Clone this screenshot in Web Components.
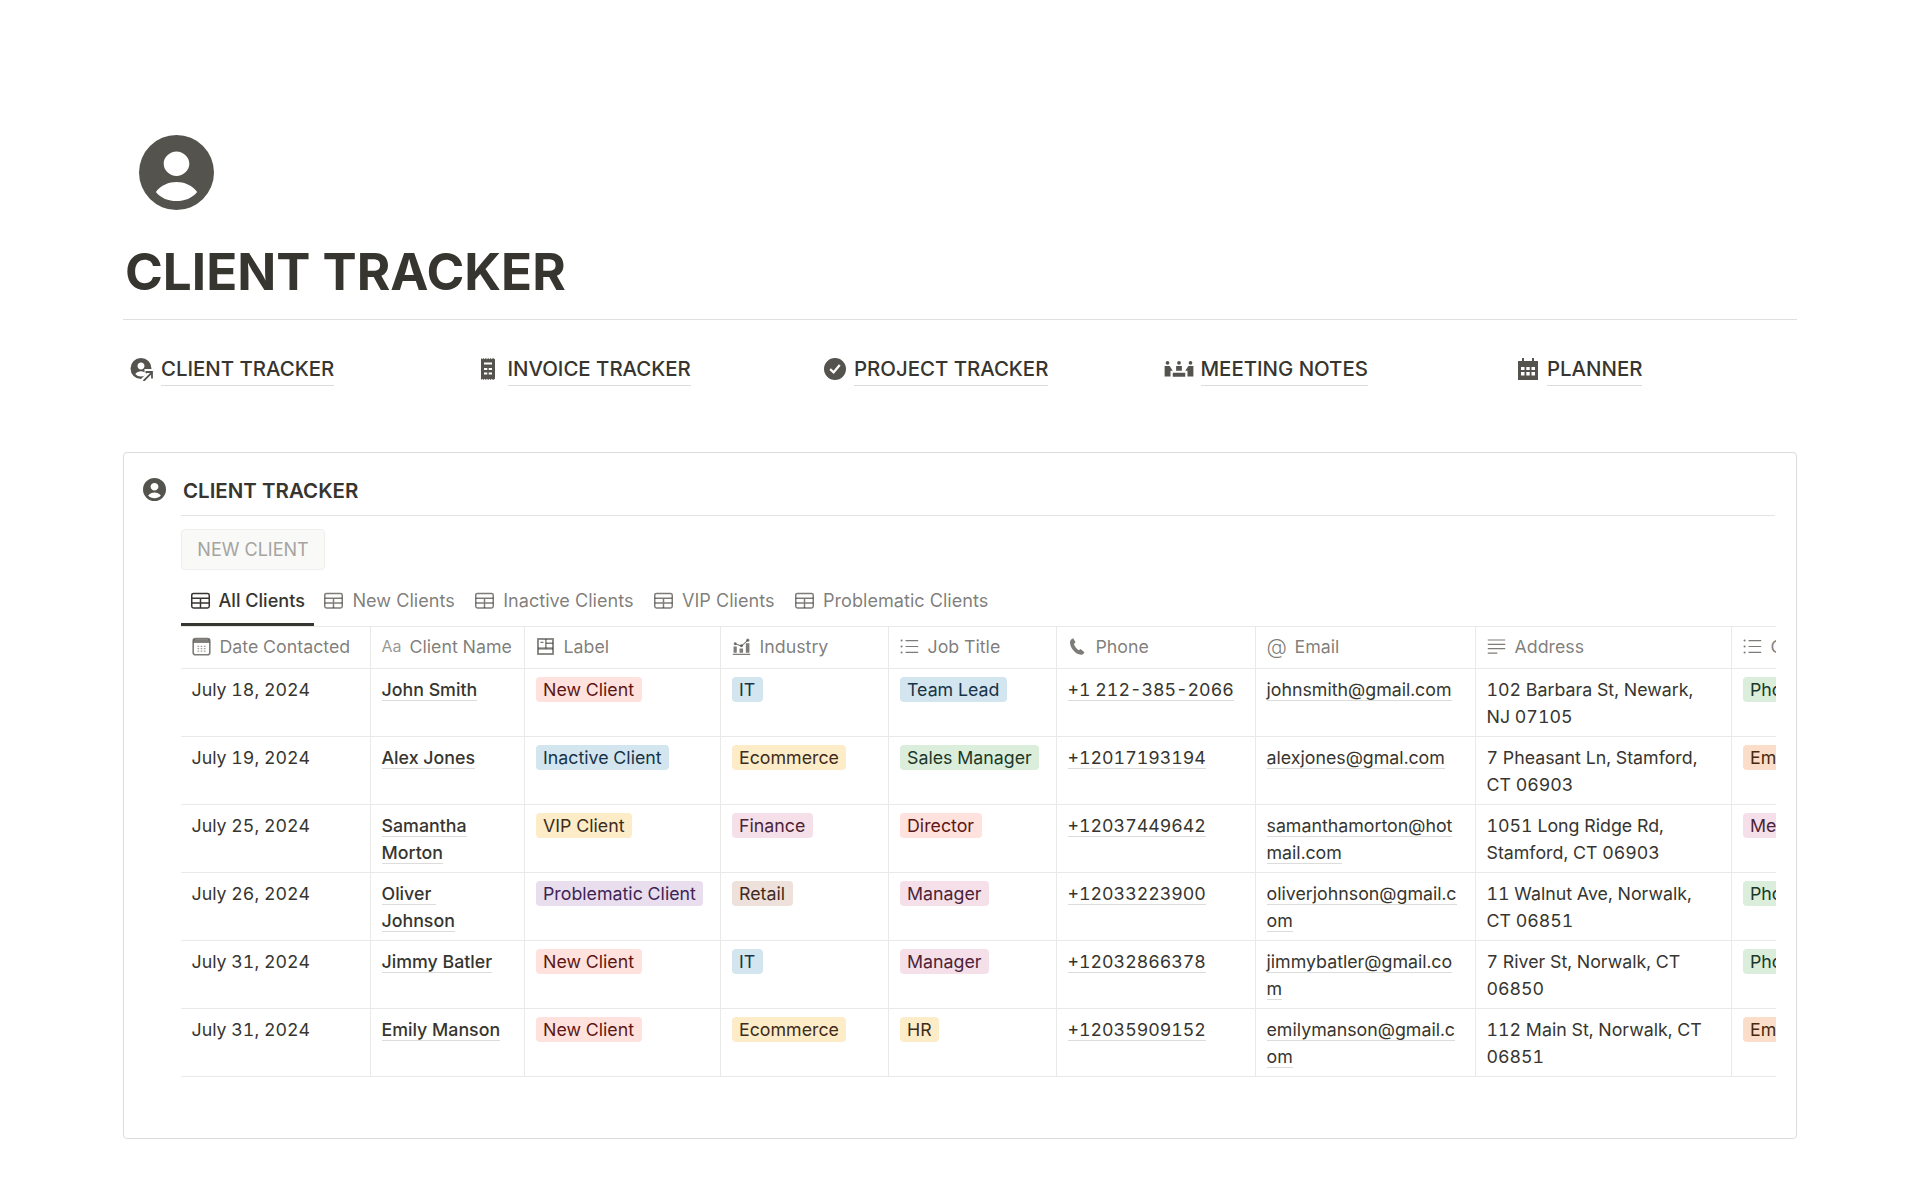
<!DOCTYPE html>
<html lang="en">
<head>
<meta charset="utf-8">
<title>Client Tracker</title>
<style>
  html, body { margin: 0; background: #fff; }
  body { font-family: Inter, "Liberation Sans", sans-serif; color: #37352f; }
</style>
</head>
<body>
<tracker-page>
  <page-head slot="head" title="CLIENT TRACKER"></page-head>
  <nav-link slot="links" icon="person-link">CLIENT TRACKER</nav-link>
  <nav-link slot="links" icon="receipt">INVOICE TRACKER</nav-link>
  <nav-link slot="links" icon="check">PROJECT TRACKER</nav-link>
  <nav-link slot="links" icon="meeting" wide>MEETING NOTES</nav-link>
  <nav-link slot="links" icon="calendar">PLANNER</nav-link>
  <client-card slot="card" heading="CLIENT TRACKER">
    <view-tabs></view-tabs>
    <client-table></client-table>
  </client-card>
</tracker-page>

<script>
const ICONS = {
  person: '<path fill-rule="evenodd" d="M12 0a12 12 0 1 0 0 24 12 12 0 0 0 0-24zm0 5.300c2.200 0 4.100 1.800 4.100 3.900s-1.900 3.900-4.100 3.900-4.100-1.800-4.100-3.900 1.900-3.900 4.100-3.900zM5.400 18.200C7 16 9.600 15 12 15s5 1 6.600 3.200c-1.600 2-4 2.900-6.600 2.900s-5-.9-6.600-2.900z"/>',
  'person-link': '<path fill-rule="evenodd" d="M11 1a10.500 10.500 0 1 0 0 21 10.500 10.500 0 0 0 0-21zm0 4.600c1.900 0 3.500 1.500 3.500 3.400s-1.600 3.400-3.500 3.400-3.500-1.500-3.500-3.400 1.600-3.400 3.500-3.400zM5.300 17c1.400-1.900 3.600-2.700 5.700-2.700s4.300.8 5.700 2.700c-1.400 1.700-3.500 2.500-5.700 2.500s-4.300-.8-5.700-2.500z"/><path d="M13 23.500l7-7" stroke="#fff" stroke-width="5"/><path d="M14.500 14h8.500v8.500" fill="none" stroke="#fff" stroke-width="4"/><path d="M13.500 24l8.300-8.300M15.500 15h6.500v6.500" fill="none" stroke="currentColor" stroke-width="1.800"/>',
  receipt: '<path fill-rule="evenodd" d="M5 1l1.200 1.200L7.400 1l1.200 1.200L9.800 1 11 2.200 12.200 1l1.200 1.200L14.600 1l1.200 1.200L17 1l2 1.200v19.600L17 23l-1.200-1.200-1.200 1.200-1.200-1.200-1.200 1.200L11 21.800 9.800 23l-1.200-1.200L7.400 23l-1.200-1.200L5 23zM8 5.500v2h8v-2zM8 11v2h3.300v-2zm4.700 0v2H16v-2zM8 15.500v2h3.300v-2zm4.700 0v2H16v-2z"/>',
  check: '<path fill-rule="evenodd" d="M12 1a11 11 0 1 0 0 22 11 11 0 0 0 0-22zm5.600 7.700l-6.900 8.200-4.300-4 1.500-1.600 2.600 2.400 5.400-6.400z"/>',
  meeting: '<circle cx="2.800" cy="7" r="1.500"/><circle cx="12" cy="7" r="1.500"/><circle cx="21.200" cy="7" r="1.500"/><path d="M.5 9.500h4L7 13.300H5.200V18H.5zM23.500 9.500h-4L17 13.300h1.800V18h4.700zM9.700 9.500h4.600v3.800H9.700zM7 15h10v3.200H7z"/>',
  calendar: '<path fill-rule="evenodd" d="M6 1h2v3h8V1h2v3h4v19H2V4h4zM5 10v3h3.500v-3zm5.300 0v3h3.400v-3zm5.200 0v3H19v-3zM5 15v3.500h3.500V15zm5.300 0v3.500h3.400V15zm5.200 0v3.500H19V15z"/>',
  table: '<g fill="none" stroke="currentColor" stroke-width="1.700"><rect x="2" y="4" width="20" height="16.500" rx="2"/><path d="M2 9.300h20M2 14.900h20M12 9.300v11.200"/></g>',
  date: '<rect x="1.500" y="2" width="21" height="20.500" rx="3" fill="none" stroke="currentColor" stroke-width="2"/><path d="M2 3h20v4.500H2z"/><path d="M7 11h2v1.500H7zm4 0h2v1.500h-2zm4 0h2v1.500h-2zm-8 3h2v1.500H7zm4 0h2v1.500h-2zm4 0h2v1.500h-2zm-8 3h2v1.500H7zm4 0h2v1.500h-2zm4 0h2v1.500h-2z" opacity=".75"/>',
  label: '<g fill="none" stroke="currentColor"><rect x="2.500" y="2.500" width="19" height="19" stroke-width="2.200"/><path d="M2.500 14.500h19" stroke-width="2.800"/><path d="M12.500 2.500v12" stroke-width="1.800"/><path d="M12.500 8h9M5.500 6.800h4" stroke-width="1.800"/></g>',
  chart: '<circle cx="4" cy="8.500" r="1.800"/><circle cx="12" cy="11" r="1.800"/><circle cx="20" cy="4" r="2"/><path d="M4 8.500l8 3 8-7.500" fill="none" stroke="currentColor" stroke-width="1.300"/><path d="M2 12h4v8H2zM9.500 14.500h4.500V20H9.500zM17.500 8H22v12h-4.500zM1 21h22v1.800H1z"/>',
  list: '<g fill="none" stroke="currentColor" stroke-width="1.500"><path d="M7 4.500h16M7 12h16M7 19.500h16"/></g><circle cx="2" cy="4.500" r="1.300"/><circle cx="2" cy="12" r="1.300"/><circle cx="2" cy="19.500" r="1.300"/>',
  phone: '<path d="M6.500 1.500l3 5.200-2 2.100c.8 3 3.300 6.100 6 7.800l2.300-1.500 5 4.100c-.8 1.900-2.300 3.300-4.300 3.300C9 21.500 2.500 13.500 2.500 6.500c0-2.200 1.700-4.200 4-5z"/>',
  address: '<path d="M1 3h22v1.500H1zM1 8.500h22V10H1zM1 14h22v1.500H1zM1 19.500h12V21H1z"/>'
};

class NtIcon extends HTMLElement {
  connectedCallback() {
    const size = this.getAttribute('size') || 20;
    this.attachShadow({ mode: 'open' }).innerHTML = `
      <style>
        :host { display: inline-flex; flex: none; line-height: 0; }
        svg { display: block; fill: currentColor; }
      </style>
      <svg width="${size}" height="${size}" viewBox="0 0 24 24">${ICONS[this.getAttribute('name')] || ''}</svg>`;
  }
}
customElements.define('nt-icon', NtIcon);

class TrackerPage extends HTMLElement {
  constructor() {
    super();
    this.attachShadow({ mode: 'open' }).innerHTML = `
      <style>
        :host { display: block; width: 1674px; margin-left: 123px; padding-top: 135px; padding-bottom: 60px; }
        .links { display: grid; grid-template-columns: repeat(5, 346.500px); height: 132px; padding-top: 34px; box-sizing: border-box; }
      </style>
      <slot name="head"></slot>
      <div class="links"><slot name="links"></slot></div>
      <slot name="card"></slot>`;
  }
}
customElements.define('tracker-page', TrackerPage);

class PageHead extends HTMLElement {
  connectedCallback() {
    const title = this.getAttribute('title');
    this.removeAttribute('title');
    this.attachShadow({ mode: 'open' }).innerHTML = `
      <style>
        :host { display: block; height: 184px; border-bottom: 1px solid #dfdfdd; }
        .icon { display: block; margin: 0 0 0 16px; color: #55534e; height: 75px; }
        h1 { margin: 31px 0 0 2px; font: 700 51.200px/60px Inter, sans-serif; color: #37352f; }
      </style>
      <div class="icon"><nt-icon name="person" size="75"></nt-icon></div>
      <h1>${title}</h1>`;
  }
}
customElements.define('page-head', PageHead);

class NavLink extends HTMLElement {
  connectedCallback() {
    const wide = this.hasAttribute('wide');
    this.attachShadow({ mode: 'open' }).innerHTML = `
      <style>
        :host { display: flex; align-items: flex-start; gap: 7px; padding-left: 6px; height: 40px; color: #55534e; }
        .ic { width: 25px; height: 30px; display: flex; align-items: center; justify-content: center; }
        .ic.w { justify-content: flex-end; }
        a { font: 500 20.400px/30px Inter, sans-serif; color: #37352f; border-bottom: 1px solid #dcdcda; height: 31px; text-decoration: none; }
      </style>
      <span class="ic ${wide ? 'w' : ''}"><nt-icon name="${this.getAttribute('icon')}" size="${wide ? 30 : 24}"></nt-icon></span>
      <a><slot></slot></a>`;
  }
}
customElements.define('nav-link', NavLink);

class ClientCard extends HTMLElement {
  connectedCallback() {
    this.attachShadow({ mode: 'open' }).innerHTML = `
      <style>
        :host { display: block; height: 687px; box-sizing: border-box; border: 1px solid #dcdcda; border-radius: 4px; padding: 0 21px 0 19px; }
        .wrap { display: flex; gap: 14px; }
        .ic { color: #55534e; padding-top: 25px; width: 24px; flex: none; }
        .body { flex: 1; min-width: 0; }
        h2 { margin: 0; height: 63px; box-sizing: border-box; border-bottom: 1px solid #e4e4e2; font: 600 20.500px/48px Inter, sans-serif; padding: 14px 0 0 2px; color: #37352f; }
        button { display: block; margin: 13px 0 0; width: 144px; height: 41px; background: #f9f9f8; border: 1px solid #eeeeec; border-radius: 4px; color: #a5a4a0; font: 400 18px Inter, sans-serif; padding: 0; }
      </style>
      <div class="wrap">
        <span class="ic"><nt-icon name="person" size="23"></nt-icon></span>
        <div class="body">
          <h2>${this.getAttribute('heading')}</h2>
          <button>NEW CLIENT</button>
          <slot></slot>
        </div>
      </div>`;
  }
}
customElements.define('client-card', ClientCard);

class ViewTabs extends HTMLElement {
  connectedCallback() {
    const tabs = ['All Clients', 'New Clients', 'Inactive Clients', 'VIP Clients', 'Problematic Clients'];
    this.attachShadow({ mode: 'open' }).innerHTML = `
      <style>
        :host { display: flex; height: 56px; padding-top: 11px; box-sizing: border-box; font: 400 18.100px Inter, sans-serif; }
        .tab { display: flex; align-items: center; gap: 8px; padding: 0 10px 7px 9.500px; height: 45px; box-sizing: border-box; color: rgba(55,53,47,.65); }
        .on { color: #37352f; font-weight: 500; border-bottom: 3px solid #37352f; padding: 0 9px 4px 8.500px; }
      </style>
      ${tabs.map((t, i) => `<div class="tab ${i ? '' : 'on'}"><nt-icon name="table" size="21"></nt-icon><span>${t}</span></div>`).join('')}`;
  }
}
customElements.define('view-tabs', ViewTabs);

class StatusTag extends HTMLElement {
  connectedCallback() {
    const c = StatusTag.COLORS[this.getAttribute('color')];
    this.attachShadow({ mode: 'open' }).innerHTML = `
      <style>
        :host { display: inline-block; height: 25px; line-height: 25px; padding: 0 7.500px; border-radius: 4px; white-space: nowrap; background: ${c[0]}; color: ${c[1]}; margin-top: 1px; }
      </style>
      <slot></slot>`;
  }
}
StatusTag.COLORS = {
  red: ['#ffe2dd', '#5d1715'],
  blue: ['#d3e5ef', '#183347'],
  yellow: ['#fdecc8', '#402c1b'],
  green: ['#dbeddb', '#1c3829'],
  purple: ['#e8deee', '#412454'],
  pink: ['#f5e0e9', '#4c2337'],
  brown: ['#eee0da', '#442a1e'],
  orange: ['#fadec9', '#49290e']
};
customElements.define('status-tag', StatusTag);

class ClientTable extends HTMLElement {
  connectedCallback() {
    const label = { n: ['New Client', 'red'], i: ['Inactive Client', 'blue'], v: ['VIP Client', 'yellow'], p: ['Problematic Client', 'purple'] };
    const ind = { it: ['IT', 'blue'], ec: ['Ecommerce', 'yellow'], fi: ['Finance', 'pink'], re: ['Retail', 'brown'] };
    const job = { tl: ['Team Lead', 'blue'], sm: ['Sales Manager', 'green'], di: ['Director', 'red'], ma: ['Manager', 'pink'], hr: ['HR', 'yellow'] };
    const via = { ph: ['Phone', 'green'], em: ['Email', 'orange'], me: ['Meeting', 'pink'] };
    const rows = [
      ['July 18, 2024', 'John Smith', 'n', 'it', 'tl', '+1 212-385-2066', 'johnsmith@gmail.com', '102 Barbara St, Newark, NJ 07105', 'ph'],
      ['July 19, 2024', 'Alex Jones', 'i', 'ec', 'sm', '+12017193194', 'alexjones@gmal.com', '7 Pheasant Ln, Stamford, CT 06903', 'em'],
      ['July 25, 2024', 'Samantha Morton', 'v', 'fi', 'di', '+12037449642', 'samanthamorton@hotmail.com', '1051 Long Ridge Rd, Stamford, CT 06903', 'me'],
      ['July 26, 2024', 'Oliver&nbsp;<br>Johnson', 'p', 're', 'ma', '+12033223900', 'oliverjohnson@gmail.com', '11 Walnut Ave, Norwalk, CT 06851', 'ph'],
      ['July 31, 2024', 'Jimmy Batler', 'n', 'it', 'ma', '+12032866378', 'jimmybatler@gmail.com', '7 River St, Norwalk, CT 06850', 'ph'],
      ['July 31, 2024', 'Emily Manson', 'n', 'ec', 'hr', '+12035909152', 'emilymanson@gmail.com', '112 Main St, Norwalk, CT 06851', 'em']
    ];
    const tag = t => `<status-tag color="${t[1]}">${t[0]}</status-tag>`;
    const link = s => `<span class="u">${s}</span>`;
    const heads = [['date', 'Date Contacted'], ['aa', 'Client Name'], ['label', 'Label'], ['chart', 'Industry'], ['list', 'Job Title'], ['phone', 'Phone'], ['at', 'Email'], ['address', 'Address'], ['list', 'Contact']];
    const headIcon = n => n === 'aa' ? '<span class="g aa">Aa</span>' : n === 'at' ? '<span class="g at">@</span>' : `<nt-icon name="${n}" size="19"></nt-icon>`;

    this.attachShadow({ mode: 'open' }).innerHTML = `
      <style>
        :host { display: block; overflow: hidden; width: 1595px; font: 400 17.800px/27px Inter, sans-serif; color: #37352f; font-variant-numeric: tabular-nums; }
        .row { display: grid; grid-template-columns: 190px 154px 196px 168px 168px 199px 220px 256px 200px; width: 1751px; border-bottom: 1px solid #e9e9e7; box-sizing: border-box; }
        .row.h { height: 43px; border-top: 1px solid #e9e9e7; color: rgba(55,53,47,.65); }
        .row.d { height: 68px; }
        .c { border-right: 1px solid #e9e9e7; padding: 7px 10.500px 0; box-sizing: border-box; min-width: 0; }
        .h .c { display: flex; align-items: center; gap: 9px; padding: 0 10.500px 2px; white-space: nowrap; overflow: hidden; }
        .g { flex: none; width: 19px; }
        .aa { font-size: 16px; opacity: .8; }
        .at { font-size: 21px; font-weight: 300; }
        .u { border-bottom: 1px solid #dcdcda; }
        .name { font-weight: 500; }
        .mail { word-break: break-all; }
        .c:last-child { border-right: 0; }
      </style>
      <div class="row h">${heads.map(h => `<div class="c">${headIcon(h[0])}<span>${h[1]}</span></div>`).join('')}</div>
      ${rows.map(r => `<div class="row d">
        <div class="c">${r[0]}</div>
        <div class="c name">${link(r[1])}</div>
        <div class="c">${tag(label[r[2]])}</div>
        <div class="c">${tag(ind[r[3]])}</div>
        <div class="c">${tag(job[r[4]])}</div>
        <div class="c">${link(r[5])}</div>
        <div class="c mail">${link(r[6])}</div>
        <div class="c">${r[7]}</div>
        <div class="c">${tag(via[r[8]])}</div>
      </div>`).join('')}`;
  }
}
customElements.define('client-table', ClientTable);
</script>
</body>
</html>
